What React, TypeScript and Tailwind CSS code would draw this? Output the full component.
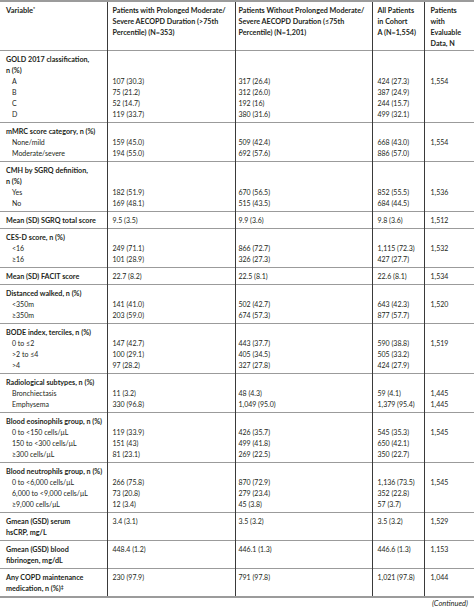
import React from 'react';

type Item = { name: string; v: string[] };
type Section = { label: string[]; single?: string[]; items?: Item[]; sup?: string };

const sections: Section[] = [
  {
    label: ['GOLD 2017 classification,', 'n (%)'],
    items: [
      { name: 'A', v: ['107 (30.3)', '317 (26.4)', '424 (27.3)', '1,554'] },
      { name: 'B', v: ['75 (21.2)', '312 (26.0)', '387 (24.9)', ''] },
      { name: 'C', v: ['52 (14.7)', '192 (16)', '244 (15.7)', ''] },
      { name: 'D', v: ['119 (33.7)', '380 (31.6)', '499 (32.1)', ''] },
    ],
  },
  {
    label: ['mMRC score category, n (%)'],
    items: [
      { name: 'None/mild', v: ['159 (45.0)', '509 (42.4)', '668 (43.0)', '1,554'] },
      { name: 'Moderate/severe', v: ['194 (55.0)', '692 (57.6)', '886 (57.0)', ''] },
    ],
  },
  {
    label: ['CMH by SGRQ definition,', 'n (%)'],
    items: [
      { name: 'Yes', v: ['182 (51.9)', '670 (56.5)', '852 (55.5)', '1,536'] },
      { name: 'No', v: ['169 (48.1)', '515 (43.5)', '684 (44.5)', ''] },
    ],
  },
  { label: ['Mean (SD) SGRQ total score'], single: ['9.5 (3.5)', '9.9 (3.6)', '9.8 (3.6)', '1,512'] },
  {
    label: ['CES-D score, n (%)'],
    items: [
      { name: '<16', v: ['249 (71.1)', '866 (72.7)', '1,115 (72.3)', '1,532'] },
      { name: '≥16', v: ['101 (28.9)', '326 (27.3)', '427 (27.7)', ''] },
    ],
  },
  { label: ['Mean (SD) FACIT score'], single: ['22.7 (8.2)', '22.5 (8.1)', '22.6 (8.1)', '1,534'] },
  {
    label: ['Distanced walked, n (%)'],
    items: [
      { name: '<350m', v: ['141 (41.0)', '502 (42.7)', '643 (42.3)', '1,520'] },
      { name: '≥350m', v: ['203 (59.0)', '674 (57.3)', '877 (57.7)', ''] },
    ],
  },
  {
    label: ['BODE index, terciles, n (%)'],
    items: [
      { name: '0 to ≤2', v: ['147 (42.7)', '443 (37.7)', '590 (38.8)', '1,519'] },
      { name: '>2 to ≤4', v: ['100 (29.1)', '405 (34.5)', '505 (33.2)', ''] },
      { name: '>4', v: ['97 (28.2)', '327 (27.8)', '424 (27.9)', ''] },
    ],
  },
  {
    label: ['Radiological subtypes, n (%)'],
    items: [
      { name: 'Bronchiectasis', v: ['11 (3.2)', '48 (4.3)', '59 (4.1)', '1,445'] },
      { name: 'Emphysema', v: ['330 (96.8)', '1,049 (95.0)', '1,379 (95.4)', '1,445'] },
    ],
  },
  {
    label: ['Blood eosinophils group, n (%)'],
    items: [
      { name: '0 to <150 cells/μL', v: ['119 (33.9)', '426 (35.7)', '545 (35.3)', '1,545'] },
      { name: '150 to <300 cells/μL', v: ['151 (43)', '499 (41.8)', '650 (42.1)', ''] },
      { name: '≥300 cells/μL', v: ['81 (23.1)', '269 (22.5)', '350 (22.7)', ''] },
    ],
  },
  {
    label: ['Blood neutrophils group, n (%)'],
    items: [
      { name: '0 to <6,000 cells/μL', v: ['266 (75.8)', '870 (72.9)', '1,136 (73.5)', '1,545'] },
      { name: '6,000 to <9,000 cells/μL', v: ['73 (20.8)', '279 (23.4)', '352 (22.8)', ''] },
      { name: '≥9,000 cells/μL', v: ['12 (3.4)', '45 (3.8)', '57 (3.7)', ''] },
    ],
  },
  { label: ['Gmean (GSD) serum', 'hsCRP, mg/L'], single: ['3.4 (3.1)', '3.5 (3.2)', '3.5 (3.2)', '1,529'] },
  { label: ['Gmean (GSD) blood', 'fibrinogen, mg/dL'], single: ['448.4 (1.2)', '446.1 (1.3)', '446.6 (1.3)', '1,153'] },
  {
    label: ['Any COPD maintenance', 'medication, n (%)'],
    sup: '‡',
    single: ['230 (97.9)', '791 (97.8)', '1,021 (97.8)', '1,044'],
  },
];

const headers = [
  ['Patients with Prolonged Moderate/', 'Severe AECOPD Duration (>75th', 'Percentile) (N=353)'],
  ['Patients Without Prolonged Moderate/', 'Severe AECOPD Duration (≤75th', 'Percentile) (N=1,201)'],
  ['All Patients', 'in Cohort', 'A (N=1,554)'],
  ['Patients', 'with', 'Evaluable', 'Data, N'],
];

const pad = ['pl-[6px]', 'pl-[5px]', 'pl-[3px]', 'pl-[5px]', 'pl-[6px]'];

function Lines({ lines }: { lines: string[] }) {
  return (
    <>
      {lines.map((l, i) => (
        <div key={i} className="whitespace-nowrap h-[11px]">
          {l || '\u00a0'}
        </div>
      ))}
    </>
  );
}

export default function App() {
  return (
    <div
      className="w-[474px] h-[608px] bg-white text-[#231f20] text-[7px] leading-[11px] overflow-hidden"
      style={{ fontFamily: '"Lato", "Open Sans", sans-serif' }}
    >
      <table className="w-full border-collapse table-fixed">
        <colgroup>
          <col className="w-[107px]" />
          <col className="w-[128px]" />
          <col className="w-[137px]" />
          <col className="w-[52px]" />
          <col className="w-[50px]" />
        </colgroup>
        <thead>
          <tr className="border-t-2 border-b border-[#9b9b9b] align-top">
            <th className="pl-[6px] pt-[3px] pb-[1px] h-[48px] text-left font-bold text-[7.5px]">
              Variable<sup className="text-[5px]">*</sup>
            </th>
            {headers.map((h, i) => (
              <th key={i} className={`${pad[i + 1]} pt-[3px] pb-[1px] text-left font-bold text-[7.2px] border-l border-l-[#3a3a3a]`}>
                <Lines lines={h} />
              </th>
            ))}
          </tr>
        </thead>
        <tbody>
          {sections.map((s, si) => {
            const blank = s.label.map(() => '');
            const cols = [0, 1, 2, 3].map((c) =>
              s.single
                ? [s.single[c], ...s.label.slice(1).map(() => '')]
                : [...blank, ...(s.items || []).map((it) => it.v[c])]
            );
            const last = si === sections.length - 1;
            return (
              <tr key={si} className={`align-top border-b ${last ? 'border-b-2' : ''} border-[#9b9b9b]`}>
                <td className="pl-[6px] pt-[3px] pb-[2px]">
                  {s.label.map((l, i) => (
                    <div key={i} className="font-bold text-[7.2px] whitespace-nowrap h-[11px]">
                      {l}
                      {i === s.label.length - 1 && s.sup ? <sup className="text-[5px]">{s.sup}</sup> : null}
                    </div>
                  ))}
                  {(s.items || []).map((it, i) => (
                    <div key={i} className="pl-[6px] whitespace-nowrap h-[11px]">
                      {it.name}
                    </div>
                  ))}
                </td>
                {cols.map((lines, c) => (
                  <td key={c} className={`${pad[c + 1]} pt-[3px] pb-[2px] border-l border-l-[#3a3a3a]`}>
                    <Lines lines={lines} />
                  </td>
                ))}
              </tr>
            );
          })}
        </tbody>
      </table>
      <div className="text-right pr-[6px] pt-[1px] italic text-[7.5px] leading-[10px]">(Continued)</div>
    </div>
  );
}
